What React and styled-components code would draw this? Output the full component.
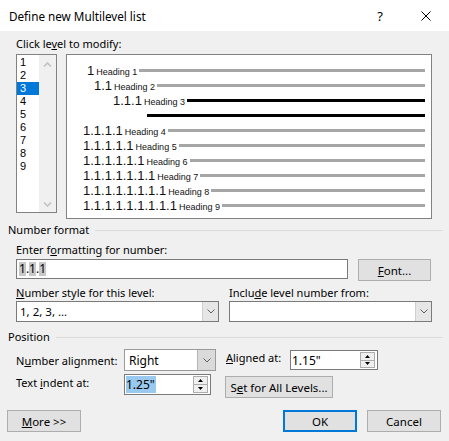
import React from "react";
import styled, { createGlobalStyle } from "styled-components";

const GlobalStyle = createGlobalStyle`
  html, body {
    margin: 0;
    padding: 0;
    background: #f0f0f0;
  }
  body {
    font-family: "Segoe UI", "Noto Sans", sans-serif;
    font-size: 11px;
    color: #000;
  }
`;

const Window = styled.div`
  width: 449px;
  height: 441px;
  background: #f0f0f0;
  overflow: hidden;
  display: flex;
  flex-direction: column;
`;

const TitleBar = styled.div`
  height: 31px;
  background: #fff;
  display: flex;
  align-items: center;
  padding-left: 9px;
`;

const Title = styled.div`
  flex: 1;
  font-size: 11.7px;
`;

const TitleButton = styled.div`
  width: 46px;
  height: 31px;
  display: flex;
  align-items: center;
  justify-content: center;
  font-size: 13px;
`;

const Body = styled.div`
  padding: 0 6px 0 8px;
  display: flex;
  flex-direction: column;
`;

const Label = styled.div`
  line-height: 16px;
  height: 16px;
  padding-left: ${(p) => p.$indent ?? 8}px;
  margin-top: ${(p) => p.$mt || 0}px;
  white-space: nowrap;
`;

const TopRow = styled.div`
  display: flex;
  align-items: flex-start;
  gap: 9px;
  margin-top: 2px;
  padding-left: 8px;
`;

const LevelList = styled.div`
  width: 41px;
  height: 159px;
  box-sizing: border-box;
  border: 1px solid #828282;
  background: #fff;
  display: flex;
`;

const LevelItems = styled.div`
  width: 22px;
  padding-top: 1px;
`;

const LevelItem = styled.div`
  height: 13px;
  line-height: 13px;
  font-family: "Liberation Sans", Arial, sans-serif;
  font-size: 11px;
  padding-left: 3px;
  background: ${(p) => (p.$selected ? "#0078d7" : "transparent")};
  color: ${(p) => (p.$selected ? "#fff" : "#000")};
`;

const ScrollTrack = styled.div`
  flex: 1;
  background: #f0f0f0;
  display: flex;
  flex-direction: column;
  justify-content: space-between;
  align-items: center;
  padding: 7px 0 5px;
`;

const Preview = styled.div`
  width: 366px;
  height: 165px;
  box-sizing: border-box;
  border: 1px solid #828282;
  background: #fff;
  padding: 9px 6px 0 0;
  display: flex;
  flex-direction: column;
  font-family: "Liberation Sans", Arial, sans-serif;
`;

const PreviewRow = styled.div`
  height: 15px;
  display: flex;
  align-items: center;
  padding-left: ${(p) => p.$indent}px;
`;

const Caption = styled.span`
  line-height: 15px;
  white-space: nowrap;
  color: #111;
`;

const Num = styled.span`
  font-size: 13px;
`;

const Heading = styled.span`
  font-size: 9px;
  margin-left: 2px;
`;

const Rule = styled.div`
  flex: 1;
  height: 3px;
  margin-left: ${(p) => (p.$bare ? 0 : 2)}px;
  margin-top: -2px;
  background: ${(p) => (p.$active ? "#000" : "#a6a6a6")};
`;

const SectionHeader = styled.div`
  display: flex;
  align-items: center;
  height: 16px;
  line-height: 16px;
  margin-top: ${(p) => p.$mt}px;

  &::after {
    content: "";
    flex: 1;
    height: 1px;
    background: #dcdcdc;
    margin-left: 6px;
  }
`;

const InputRow = styled.div`
  display: flex;
  align-items: flex-start;
  gap: 10px;
  margin-top: 1px;
  padding-left: 8px;
`;

const TextBox = styled.div`
  width: ${(p) => p.$w}px;
  height: ${(p) => p.$h || 20}px;
  box-sizing: border-box;
  border: 1px solid #7a7a7a;
  background: #fff;
  display: flex;
  align-items: center;
  padding-left: 2px;
  line-height: 14px;
  font-size: 12px;
`;

const Field = styled.span`
  background: #c8c8c8;
`;

const Button = styled.button`
  width: ${(p) => p.$w}px;
  height: ${(p) => p.$h || 22}px;
  box-sizing: border-box;
  border: ${(p) => (p.$default ? "2px solid #0078d7" : "1px solid #adadad")};
  background: #e1e1e1;
  font-family: inherit;
  font-size: 11.5px;
  color: #000;
  padding: 0;
  margin-top: ${(p) => p.$mt || 0}px;
  margin-left: ${(p) => p.$ml || 0}px;
  margin-right: ${(p) => p.$mr || 0}px;
`;

const SelectGrid = styled.div`
  display: grid;
  grid-template-columns: 203px 203px;
  column-gap: 10px;
  margin-top: 4px;
  padding-left: 8px;
`;

const Select = styled.div`
  width: ${(p) => p.$w}px;
  height: ${(p) => p.$h || 21}px;
  box-sizing: border-box;
  border: 1px solid ${(p) => (p.$strong ? "#9a9a9a" : "#7a7a7a")};
  background: #fff;
  display: flex;
  align-items: stretch;
`;

const SelectValue = styled.div`
  flex: 1;
  display: flex;
  align-items: center;
  padding-left: ${(p) => p.$pl || 3}px;
  font-size: ${(p) => p.$fs || 11.5}px;
`;

const DropButton = styled.div`
  width: ${(p) => p.$w || 15}px;
  background: ${(p) => (p.$dark ? "#dadada" : "#e6e6e6")};
  border-left: 1px solid ${(p) => (p.$dark ? "#b4b4b4" : "#d0d0d0")};
  display: flex;
  align-items: center;
  justify-content: center;
`;

const PosRow = styled.div`
  display: flex;
  align-items: flex-start;
  padding-left: 8px;
  margin-top: ${(p) => p.$mt}px;
`;

const PosLabel = styled.div`
  width: ${(p) => p.$w}px;
  line-height: 16px;
  margin-top: ${(p) => p.$mt || 0}px;
  margin-left: ${(p) => p.$ml || 0}px;
  white-space: nowrap;
`;

const SpinBox = styled.div`
  width: ${(p) => p.$w}px;
  height: ${(p) => p.$h || 20}px;
  box-sizing: border-box;
  border: 1px solid #7a7a7a;
  background: #fff;
  display: flex;
  align-items: stretch;
  margin-top: ${(p) => p.$mt || 0}px;
`;

const SpinValue = styled.div`
  flex: 1;
  display: flex;
  align-items: center;
  padding-left: 1px;
  font-size: 12px;
`;

const Selected = styled.span`
  background: #99c9ef;
  padding-right: 1px;
`;

const SpinButtons = styled.div`
  width: 13px;
  margin: 1px 2px 1px 0;
  border: 1px solid #adadad;
  background: #f0f0f0;
  display: flex;
  flex-direction: column;
`;

const SpinHalf = styled.div`
  flex: 1;
  display: flex;
  align-items: center;
  justify-content: center;
  & + & {
    border-top: 1px solid #adadad;
  }
`;

const Footer = styled.div`
  display: flex;
  align-items: center;
  margin-top: ${(p) => p.$mt}px;
  margin-left: -1px;
`;

const Spacer = styled.div`
  flex: 1;
`;

const Chevron = ({ up, color = "#606060", w = 8, h = 5, sw = 1 }) => (
  <svg width={w} height={h} viewBox="0 0 8 5">
    <polyline
      points={up ? "0.5,4.5 4,1 7.5,4.5" : "0.5,0.5 4,4 7.5,0.5"}
      fill="none"
      stroke={color}
      strokeWidth={sw}
    />
  </svg>
);

const Tri = ({ up }) => (
  <svg width="5" height="3" viewBox="0 0 5 3">
    <polygon points={up ? "2.5,0 5,3 0,3" : "0,0 5,0 2.5,3"} fill="#000" />
  </svg>
);

const Spin = ({ w, h, mt, children }) => (
  <SpinBox $w={w} $h={h} $mt={mt}>
    <SpinValue>{children}</SpinValue>
    <SpinButtons>
      <SpinHalf>
        <Tri up />
      </SpinHalf>
      <SpinHalf>
        <Tri />
      </SpinHalf>
    </SpinButtons>
  </SpinBox>
);

const levels = [
  { num: "1", head: "Heading 1", indent: 20 },
  { num: "1.1", head: "Heading 2", indent: 27 },
  { num: "1.1.1", head: "Heading 3", indent: 46, active: true },
  { bare: true, indent: 80 },
  { num: "1.1.1.1", head: "Heading 4", indent: 16 },
  { num: "1.1.1.1.1", head: "Heading 5", indent: 16 },
  { num: "1.1.1.1.1.1", head: "Heading 6", indent: 16 },
  { num: "1.1.1.1.1.1.1", head: "Heading 7", indent: 16 },
  { num: "1.1.1.1.1.1.1.1", head: "Heading 8", indent: 16 },
  { num: "1.1.1.1.1.1.1.1.1", head: "Heading 9", indent: 16 },
];

export default function App() {
  return (
    <Window>
      <GlobalStyle />
      <TitleBar>
        <Title>Define new Multilevel list</Title>
        <TitleButton>?</TitleButton>
        <TitleButton>
          <svg width="10" height="10" viewBox="0 0 10 10">
            <path d="M0.5 0.5 L9.5 9.5 M9.5 0.5 L0.5 9.5" stroke="#000" strokeWidth="1" />
          </svg>
        </TitleButton>
      </TitleBar>

      <Body>
        <Label $mt={5}>
          Click le<u>v</u>el to modify:
        </Label>
        <TopRow>
          <LevelList>
            <LevelItems>
              {[1, 2, 3, 4, 5, 6, 7, 8, 9].map((n) => (
                <LevelItem key={n} $selected={n === 3}>
                  {n}
                </LevelItem>
              ))}
            </LevelItems>
            <ScrollTrack>
              <Chevron up color="#c2c2c2" w={9} h={5} sw={1.6} />
              <Chevron color="#c2c2c2" w={9} h={5} sw={1.6} />
            </ScrollTrack>
          </LevelList>
          <Preview>
            {levels.map((l, i) => (
              <PreviewRow key={i} $indent={l.indent}>
                {!l.bare && (
                  <Caption>
                    <Num>{l.num}</Num>
                    <Heading>{l.head}</Heading>
                  </Caption>
                )}
                <Rule $active={l.active || l.bare} $bare={l.bare} />
              </PreviewRow>
            ))}
          </Preview>
        </TopRow>

        <SectionHeader $mt={3}>Number format</SectionHeader>
        <Label $mt={4}>
          Enter f<u>o</u>rmatting for number:
        </Label>
        <InputRow>
          <TextBox $w={332}>
            <Field>1</Field>.<Field>1</Field>.<Field>1</Field>
          </TextBox>
          <Button $w={73}>
            <u>F</u>ont...
          </Button>
        </InputRow>

        <SelectGrid>
          <Label $indent={0}>
            <u>N</u>umber style for this level:
          </Label>
          <Label $indent={0}>
            Inclu<u>d</u>e level number from:
          </Label>
          <Select $w={203}>
            <SelectValue>1, 2, 3, ...</SelectValue>
            <DropButton>
              <Chevron />
            </DropButton>
          </Select>
          <Select $w={203}>
            <SelectValue />
            <DropButton>
              <Chevron />
            </DropButton>
          </Select>
        </SelectGrid>

        <SectionHeader $mt={7}>Position</SectionHeader>
        <PosRow $mt={4}>
          <PosLabel $w={108} $mt={4}>
            N<u>u</u>mber alignment:
          </PosLabel>
          <Select $w={92} $h={22} $strong>
            <SelectValue $pl={4} $fs={12}>
              Right
            </SelectValue>
            <DropButton $w={17} $dark>
              <Chevron />
            </DropButton>
          </Select>
          <PosLabel $w={64} $mt={1} $ml={10}>
            <u>A</u>ligned at:
          </PosLabel>
          <Spin w={88} mt={1}>
            1.15"
          </Spin>
        </PosRow>
        <PosRow $mt={3}>
          <PosLabel $w={108} $mt={1}>
            Text <u>i</u>ndent at:
          </PosLabel>
          <Spin w={87} h={21}>
            <Selected>1.25"</Selected>
          </Spin>
          <Button $w={108} $mt={2} $ml={14}>
            S<u>e</u>t for All Levels...
          </Button>
        </PosRow>

        <Footer $mt={12}>
          <Button $w={74}>
            <u>M</u>ore &gt;&gt;
          </Button>
          <Spacer />
          <Button $w={74} $default>
            OK
          </Button>
          <Button $w={74} $ml={10} $mr={2}>
            Cancel
          </Button>
        </Footer>
      </Body>
    </Window>
  );
}
